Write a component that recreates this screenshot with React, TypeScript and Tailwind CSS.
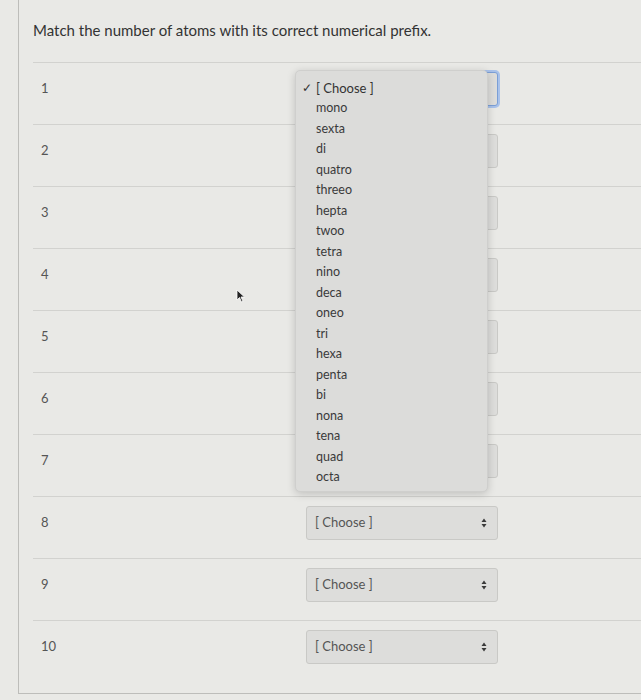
import React from "react";

const options = [
  "mono",
  "sexta",
  "di",
  "quatro",
  "threeo",
  "hepta",
  "twoo",
  "tetra",
  "nino",
  "deca",
  "oneo",
  "tri",
  "hexa",
  "penta",
  "bi",
  "nona",
  "tena",
  "quad",
  "octa",
];

function Arrows() {
  return (
    <svg width="6" height="10" viewBox="0 0 6 10" className="shrink-0">
      <path d="M3 0.5 L5.5 4 L0.5 4 Z" fill="#3a3a3a" />
      <path d="M3 9.5 L5.5 6 L0.5 6 Z" fill="#3a3a3a" />
    </svg>
  );
}

// selects under the open menu are hidden behind it, so their label is not drawn
function Select({ focused, covered }: { focused?: boolean; covered?: boolean }) {
  return (
    <div
      className={
        "flex h-[34px] w-[192px] items-center justify-between rounded-[3px] border bg-[#dddddb] pl-2 pr-2.5 text-[13px] text-[#555] " +
        (focused
          ? "border-[#7b9fd6] ring-2 ring-[#a9c2ea]"
          : "border-[#c9c9c6]")
      }
    >
      <span>{covered ? "" : "[ Choose ]"}</span>
      <Arrows />
    </div>
  );
}

export default function App() {
  const rows = Array.from({ length: 10 }, (_, i) => i + 1);
  return (
    <div
      className="relative h-[700px] w-[641px] overflow-hidden bg-[#e9e9e6] text-[#3c3c3c]"
      style={{ fontFamily: "Lato, 'Open Sans', sans-serif" }}
    >
      <div className="ml-[18px] h-[694px] border-b border-l border-[#bdbdba] pl-[14px]">
        <h1 className="pt-[20px] text-[15px] leading-5 text-[#333]">
          Match the number of atoms with its correct numerical prefix.
        </h1>
        <div className="mt-[22px]">
          {rows.map((n) => (
            <div
              key={n}
              className="flex h-[62px] items-center border-t border-[#d2d2cf] pb-[10px]"
            >
              <span className="w-[273px] pl-[8px] text-[13px] text-[#555]">
                {n}
              </span>
              <Select focused={n === 1} covered={n < 8} />
            </div>
          ))}
        </div>
      </div>

      {/* open dropdown menu */}
      <div className="absolute left-[295px] top-[70px] w-[193px] rounded-[5px] border border-[#cfcfcd] bg-[#dcdcda] pt-[7px] pb-[3px] shadow-[0_2px_8px_rgba(0,0,0,0.18)]">
        <div className="flex h-[20.5px] items-center pl-[6px] text-[13px] text-[#333]">
          <span className="w-[14px] text-[12px]">✓</span>
          <span>[ Choose ]</span>
        </div>
        {options.map((o) => (
          <div
            key={o}
            className="flex h-[20.5px] items-center pl-[20px] text-[12.5px] text-[#3a3a3a]"
          >
            {o}
          </div>
        ))}
      </div>

      {/* mouse pointer */}
      <svg
        className="absolute left-[236px] top-[289px]"
        width="10"
        height="14"
        viewBox="0 0 10 14"
      >
        <path d="M1 1 L1 11 L3.5 8.5 L5.5 13 L7 12.3 L5 8 L8.5 8 Z" fill="#222" stroke="#fff" strokeWidth="0.8" />
      </svg>
    </div>
  );
}
